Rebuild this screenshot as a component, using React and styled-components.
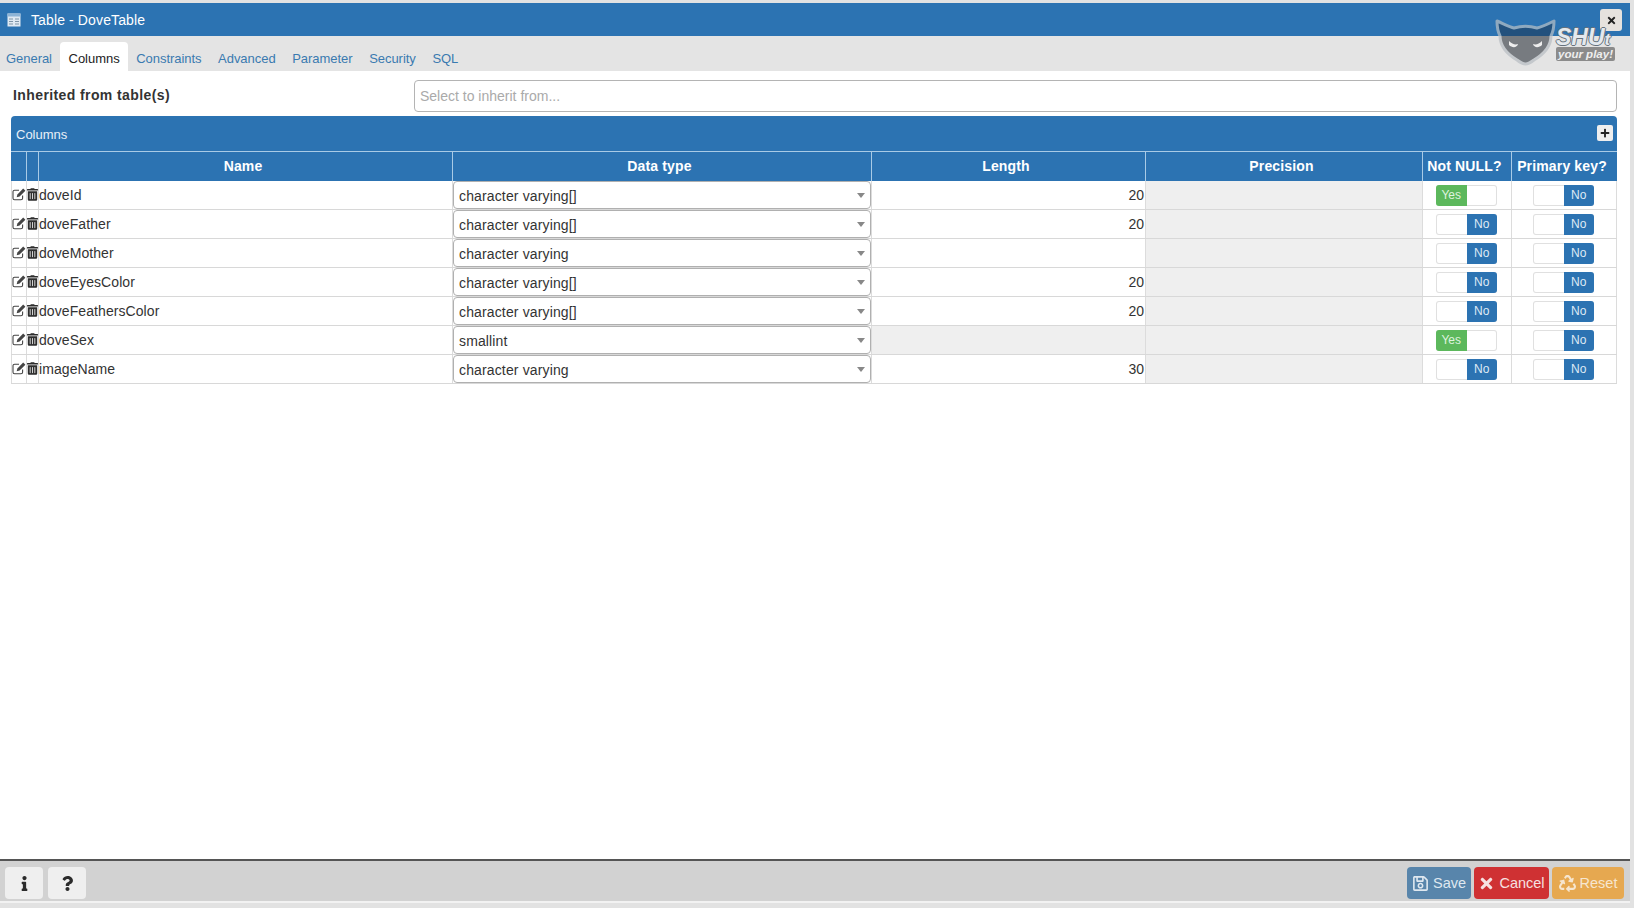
import { createGlobalStyle, styled } from 'styled-components';
import {
  FaInfo,
  FaPlus,
  FaQuestion,
  FaRecycle,
  FaRegSave,
  FaTimes,
  FaTrashAlt,
} from 'react-icons/fa';

const BLUE = '#2c73b2';
const COLUMNS = '15px 12px 414px 419px 274px 277px 89px 106px';

const TABS = ['General', 'Columns', 'Constraints', 'Advanced', 'Parameter', 'Security', 'SQL'];

const ROWS = [
  { name: 'doveId', type: 'character varying[]', length: '20', notNull: true },
  { name: 'doveFather', type: 'character varying[]', length: '20' },
  { name: 'doveMother', type: 'character varying', length: '' },
  { name: 'doveEyesColor', type: 'character varying[]', length: '20' },
  { name: 'doveFeathersColor', type: 'character varying[]', length: '20' },
  { name: 'doveSex', type: 'smallint', length: '', notNull: true, noLength: true },
  { name: 'imageName', type: 'character varying', length: '30' },
];

const GlobalStyle = createGlobalStyle`
  html, body {
    margin: 0;
    padding: 0;
    height: 100%;
    overflow: hidden;
  }
  body {
    font-family: "Liberation Sans", Arial, sans-serif;
    font-size: 14px;
    color: #333;
  }
`;

const Page = styled.div`
  height: 908px;
  background: #e2e2e2;
  padding: 3px 4px 5px 0;
  box-sizing: border-box;
  display: flex;
  flex-direction: column;
  position: relative;
`;

const TitleBar = styled.div`
  height: 33px;
  flex: none;
  background: ${BLUE};
  color: #fff;
  display: flex;
  align-items: center;
  gap: 10px;
  padding-left: 7px;
  font-size: 14px;
  letter-spacing: 0.12px;
`;

const TabBar = styled.div`
  height: 35px;
  flex: none;
  background: #e4e4e4;
  display: flex;
  align-items: flex-end;
  padding-left: 6px;
`;

const Tab = styled.div`
  height: 29px;
  line-height: 34px;
  font-size: 13px;
  letter-spacing: -0.04px;
  padding: 0 8.3px;
  margin-left: ${(p) => (p.$first ? '-8.3px' : '0')};
  color: ${(p) => (p.$active ? '#222' : '#3a7ab0')};
  background: ${(p) => (p.$active ? '#fff' : 'transparent')};
  border-radius: 4px 4px 0 0;
  box-sizing: border-box;
`;

const Body = styled.div`
  flex: 1;
  background: #fff;
  padding: 9px 13px 0 11px;
  min-height: 0;
`;

const InheritRow = styled.div`
  height: 32px;
  display: flex;
  align-items: center;
  justify-content: space-between;
  margin-bottom: 4px;
`;

const InheritLabel = styled.label`
  font-weight: 700;
  padding: 0 0 2px 2px;
  letter-spacing: 0.4px;
  color: #333;
`;

const InheritInput = styled.div`
  width: 1203px;
  height: 32px;
  box-sizing: border-box;
  border: 1px solid #b4b4b4;
  border-radius: 4px;
  padding: 0 5px;
  line-height: 30px;
  color: #aaa;
`;

const Panel = styled.div`
  width: 1606px;
`;

const PanelHead = styled.div`
  height: 36px;
  background: ${BLUE};
  border-radius: 4px 4px 0 0;
  border-bottom: 1px solid #a9cbe6;
  box-sizing: border-box;
  color: #e8f0f8;
  font-size: 13px;
  display: flex;
  align-items: center;
  justify-content: space-between;
  padding: 2px 4px 0 5px;
`;

const AddButton = styled.div`
  width: 16px;
  height: 16px;
  margin-top: -3px;
  background: #eee;
  border-radius: 2px;
  color: #222;
  display: flex;
  align-items: center;
  justify-content: center;
  font-size: 10px;
`;

const HeadRow = styled.div`
  display: grid;
  grid-template-columns: ${COLUMNS};
  height: 29px;
  background: ${BLUE};
  color: #fff;
  font-weight: 700;
`;

const HeadCell = styled.div`
  display: flex;
  align-items: center;
  justify-content: center;
  padding: 0 5px 2px 0;
  letter-spacing: 0.15px;
  border-left: 1px solid ${(p) => (p.$first ? 'transparent' : '#a9cbe6')};
  white-space: nowrap;
`;

const Row = styled.div`
  display: grid;
  grid-template-columns: ${COLUMNS};
  height: 29px;
  box-sizing: border-box;
  border-bottom: 1px solid #d8d8d8;
`;

const Cell = styled.div`
  display: flex;
  align-items: center;
  border-left: 1px solid #dcdcdc;
  justify-content: ${(p) => p.$justify || 'flex-start'};
  background: ${(p) => (p.$disabled ? '#efefef' : '#fff')};
  padding-right: ${(p) => (p.$pad ? '1px' : '0')};
  min-width: 0;
  white-space: nowrap;
`;

const NameCell = styled(Cell)`
  letter-spacing: 0.08px;
`;

const ToggleCell = styled(Cell)`
  justify-content: center;
  padding-right: 1px;
`;

const LastCell = styled(ToggleCell)`
  border-right: 1px solid #dcdcdc;
`;

const IconCell = styled(Cell)`
  justify-content: center;
  padding-bottom: 2px;
  color: #2e2e2e;
  font-size: 13px;
`;

const SelectBox = styled.div`
  width: 100%;
  height: 28px;
  box-sizing: border-box;
  border: 1px solid #b0b0b0;
  border-radius: 4px;
  display: flex;
  align-items: center;
  justify-content: space-between;
  padding: 1px 5px 0;
  letter-spacing: 0.14px;
  color: #333;
`;

const Caret = styled.span`
  width: 0;
  height: 0;
  border-left: 4.5px solid transparent;
  border-right: 4.5px solid transparent;
  border-top: 5px solid #888;
`;

const Toggle = styled.div`
  width: 61px;
  height: 21px;
  display: flex;
  border-radius: 3px;
  font-size: 12px;
  box-shadow: inset 0 0 0 1px #e0e0e0;
  overflow: hidden;
`;

const ToggleSide = styled.div`
  flex: 1;
  display: flex;
  align-items: center;
  justify-content: center;
`;

const YesSide = styled(ToggleSide)`
  background: #5cb85c;
  color: #dff3df;
`;

const NoSide = styled(ToggleSide)`
  background: ${BLUE};
  color: #dfeaf5;
`;

const Footer = styled.div`
  height: 38px;
  flex: none;
  background: #d2d2d2;
  border-top: 2px solid #555;
  border-bottom: 2px solid #f2f2f2;
  display: flex;
  align-items: flex-end;
  justify-content: space-between;
  padding: 0 6px 2px 5px;
`;

const ButtonGroup = styled.div`
  display: flex;
  gap: ${(p) => p.$gap || '3px'};
`;

const HelpButton = styled.div`
  width: 38px;
  height: 32px;
  background: #efefef;
  border-radius: 4px;
  display: flex;
  align-items: center;
  justify-content: center;
  color: #2b2b2b;
  font-size: 15px;
`;

const ActionButton = styled.div`
  height: 32px;
  width: ${(p) => p.$width};
  box-sizing: border-box;
  background: ${(p) => p.$bg};
  color: ${(p) => p.$color};
  border-radius: 4px;
  display: flex;
  align-items: center;
  justify-content: center;
  gap: 4px;
  font-size: 14.5px;
  svg {
    font-size: 17px;
    flex: none;
  }
`;

const CloseButton = styled.div`
  position: absolute;
  top: 9px;
  left: 1600px;
  width: 22px;
  height: 22px;
  background: #e6e2de;
  border-radius: 3px;
  display: flex;
  align-items: center;
  justify-content: center;
  color: #222;
  font-size: 11px;
`;

const Logo = styled.div`
  position: absolute;
  top: 18px;
  left: 1494px;
  width: 128px;
  height: 48px;
`;

const LogoTitle = styled.div`
  position: absolute;
  left: 62px;
  top: 10px;
  font: italic 700 23px/19px "Liberation Sans", Arial, sans-serif;
  color: #e4e9ee;
  text-shadow: -1px 0 #66727d, 1px 0 #66727d, 0 1px #66727d, 0 -1px #66727d;
  white-space: nowrap;
`;

const LogoSmallT = styled.span`
  font-size: 17px;
`;

const LogoSub = styled.div`
  position: absolute;
  left: 62px;
  top: 29px;
  font: italic 700 11.5px/14px "Liberation Sans", Arial, sans-serif;
  color: #eee;
  background: #8b8b8b;
  border-radius: 2px;
  padding: 0 2px;
  white-space: nowrap;
`;

function TableIcon() {
  return (
    <svg width="14" height="14" viewBox="0 0 14 14">
      <rect x="0.5" y="0.5" width="13" height="13" fill="#dfe9f2" />
      <rect x="0.5" y="0.5" width="13" height="3" fill="#8db4d6" />
      <path d="M2 6h4M8 6h4M2 8.5h4M8 8.5h4M2 11h4M8 11h4" stroke="#7f95a8" strokeWidth="1" />
    </svg>
  );
}

function EditIcon() {
  return (
    <svg width="14" height="13" viewBox="0 0 14 13">
      <path
        d="M7 2.2H2.6A1.6 1.6 0 0 0 1 3.8v6.4a1.6 1.6 0 0 0 1.6 1.6H9a1.6 1.6 0 0 0 1.6-1.6V7.5"
        fill="none"
        stroke="#444"
        strokeWidth="1.1"
      />
      <path d="M11.2.6 13.4 2.8 7.6 8.6l-2.9.7.7-2.9Z" fill="#444" />
    </svg>
  );
}

function CatMask() {
  return (
    <svg width="64" height="48" viewBox="0 0 64 48" style={{ position: 'absolute', left: 0, top: 0 }}>
      <defs>
        <linearGradient id="maskFill" x1="0" y1="0" x2="0" y2="1">
          <stop offset="0.36" stopColor="#23517d" />
          <stop offset="0.36" stopColor="#777b80" />
        </linearGradient>
        <linearGradient id="maskLine" x1="0" y1="0" x2="0" y2="1">
          <stop offset="0.36" stopColor="#8fa9bf" />
          <stop offset="0.36" stopColor="#c4c8cc" />
        </linearGradient>
      </defs>
      <path
        d="M3 3 C10 6 16 9 20 10 C27 8 36 8 43 10 C48 9 54 6 60 3 C60 9 59 14 57 18 C57 28 50 36 40 42 C36 45 33 46 31.5 46 C30 46 27 45 23 42 C13 36 6 28 6 18 C4 14 3 9 3 3 Z"
        fill="url(#maskFill)"
        stroke="url(#maskLine)"
        strokeWidth="3"
        strokeLinejoin="round"
      />
      <path d="M15 23 C18 26 21 27 24 26 C23 30 18 30 15 27 Z" fill="#eee" />
      <path d="M48 23 C45 26 42 27 39 26 C40 30 45 30 48 27 Z" fill="#eee" />
    </svg>
  );
}

function App() {
  return (
    <Page>
      <GlobalStyle />
      <TitleBar>
        <TableIcon />
        Table - DoveTable
      </TitleBar>
      <TabBar>
        {TABS.map((tab, i) => (
          <Tab key={tab} $first={i === 0} $active={tab === 'Columns'}>
            {tab}
          </Tab>
        ))}
      </TabBar>
      <Body>
        <InheritRow>
          <InheritLabel>Inherited from table(s)</InheritLabel>
          <InheritInput>Select to inherit from...</InheritInput>
        </InheritRow>
        <Panel>
          <PanelHead>
            Columns
            <AddButton>
              <FaPlus />
            </AddButton>
          </PanelHead>
          <HeadRow>
            <HeadCell $first />
            <HeadCell />
            <HeadCell>Name</HeadCell>
            <HeadCell>Data type</HeadCell>
            <HeadCell>Length</HeadCell>
            <HeadCell>Precision</HeadCell>
            <HeadCell>Not NULL?</HeadCell>
            <HeadCell>Primary key?</HeadCell>
          </HeadRow>
          {ROWS.map((row) => (
            <Row key={row.name}>
              <IconCell>
                <EditIcon />
              </IconCell>
              <IconCell>
                <FaTrashAlt />
              </IconCell>
              <NameCell>{row.name}</NameCell>
              <Cell>
                <SelectBox>
                  {row.type}
                  <Caret />
                </SelectBox>
              </Cell>
              <Cell $justify="flex-end" $pad $disabled={row.noLength}>
                {row.length}
              </Cell>
              <Cell $disabled />
              <ToggleCell>
                <Toggle>
                  {row.notNull ? (
                    <>
                      <YesSide>Yes</YesSide>
                      <ToggleSide />
                    </>
                  ) : (
                    <>
                      <ToggleSide />
                      <NoSide>No</NoSide>
                    </>
                  )}
                </Toggle>
              </ToggleCell>
              <LastCell>
                <Toggle>
                  <ToggleSide />
                  <NoSide>No</NoSide>
                </Toggle>
              </LastCell>
            </Row>
          ))}
        </Panel>
      </Body>
      <Footer>
        <ButtonGroup $gap="5px">
          <HelpButton>
            <FaInfo />
          </HelpButton>
          <HelpButton>
            <FaQuestion />
          </HelpButton>
        </ButtonGroup>
        <ButtonGroup>
          <ActionButton $width="64px" $bg="#5885ab" $color="#dfe8f0">
            <FaRegSave />
            Save
          </ActionButton>
          <ActionButton $width="75px" $bg="#cf3133" $color="#f6e0e0">
            <FaTimes />
            Cancel
          </ActionButton>
          <ActionButton $width="72px" $bg="#e6a850" $color="#f6e6cf">
            <FaRecycle />
            Reset
          </ActionButton>
        </ButtonGroup>
      </Footer>
      <CloseButton>
        <FaTimes />
      </CloseButton>
      <Logo>
        <CatMask />
        <LogoTitle>
          SHU<LogoSmallT>t</LogoSmallT>
        </LogoTitle>
        <LogoSub>your play!</LogoSub>
      </Logo>
    </Page>
  );
}

export default App;
